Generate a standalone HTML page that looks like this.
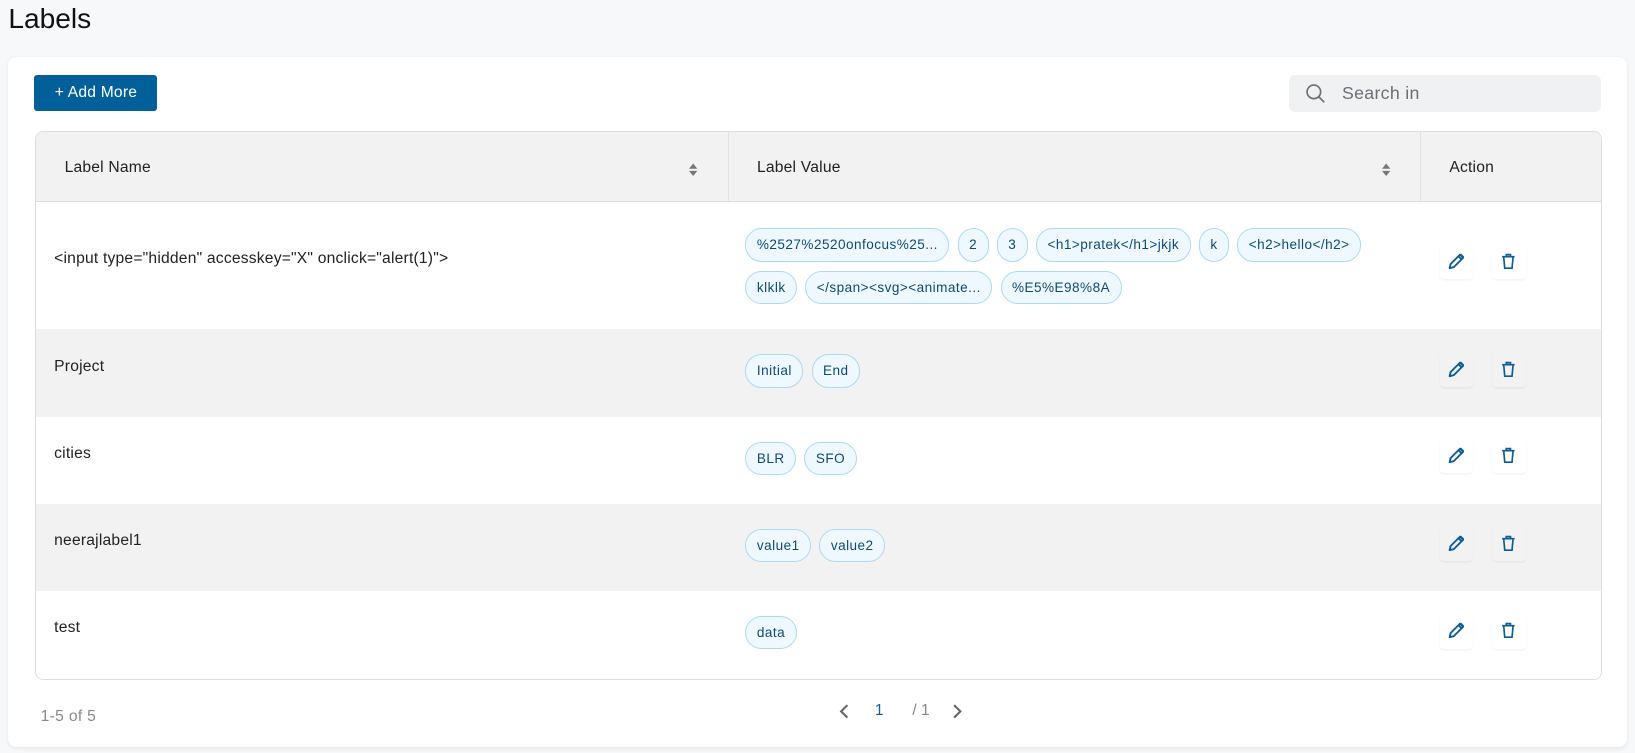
<!DOCTYPE html>
<html><head><meta charset="utf-8"><style>
html{zoom:1.04273}
body{margin:0;background:#f7f8fa;font-family:"Liberation Sans",sans-serif;width:1568px;height:722px;position:relative;overflow:hidden}
.abs{position:absolute}
h1{position:absolute;left:8px;top:3px;margin:0;font-size:27px;font-weight:normal;color:#111}
.card{left:8px;top:55px;width:1552px;height:661px;background:#fff;border-radius:8px;box-shadow:0 1px 4px rgba(0,0,0,.08)}
.btn{left:33px;top:72px;width:118px;height:34px;background:#01609a;border-radius:3px;color:#fff;font-size:15px;line-height:34px;text-align:center;letter-spacing:.2px}
.search{left:1236px;top:72px;width:299px;height:35px;background:#f0f1f3;border-radius:6px}
.search span{position:absolute;left:51px;top:8px;font-size:17px;color:#6b6f76;letter-spacing:.3px}
.table{left:34px;top:126px;width:1500px;height:524px;border:1px solid #ddd;border-radius:8px;overflow:hidden}
.hdr{left:0;top:0;width:1500px;height:66px;background:#f2f2f2;border-bottom:1px solid #ddd}
.hdr .t{position:absolute;top:26px;font-size:15px;color:#222;letter-spacing:.2px}
.div{position:absolute;top:0;width:1px;height:66px;background:#e2e2e2}
.row{position:absolute;left:0;width:1500px}
.name{position:absolute;left:17px;font-size:15px;color:#222;letter-spacing:.2px}
.tags{position:absolute;left:680px;width:640px}
.tag{display:inline-block;height:30px;line-height:30px;padding:0 10px;border:1px solid #a9d9f8;background:#f0f8ff;border-radius:16px;font-size:13px;color:#0c4a76;margin:0 8px 9px 0;vertical-align:top;letter-spacing:.45px}
.act{position:absolute;width:32px;height:32px;border-radius:4px;box-shadow:0 1px 2px rgba(0,0,0,.05)}
.act svg{position:absolute;left:7px;top:6px}
.sort{position:absolute;width:8px}
</style></head><body>
<h1>Labels</h1>
<div class="abs card"></div>
<div class="abs btn">+ Add More</div>
<div class="abs search">
<svg class="abs" style="left:16px;top:8px" width="20" height="20" viewBox="0 0 20 20" fill="none" stroke="#6b6f76" stroke-width="1.6"><circle cx="8.5" cy="8.5" r="6.5"/><path d="M13.3 13.3L18.5 18.5"/></svg>
<span>Search in</span></div>
<div class="abs table">
<div class="abs hdr">
<span class="t" style="left:27px">Label Name</span>
<svg class="sort" style="left:626px;top:29px" width="9" height="13" viewBox="0 0 8 12"><path d="M0 5L4 0L8 5Z M0 7L4 12L8 7Z" fill="#777"/></svg>
<div class="div" style="left:663px"></div>
<span class="t" style="left:691px">Label Value</span>
<svg class="sort" style="left:1290px;top:29px" width="9" height="13" viewBox="0 0 8 12"><path d="M0 5L4 0L8 5Z M0 7L4 12L8 7Z" fill="#777"/></svg>
<div class="div" style="left:1327px"></div>
<span class="t" style="left:1355px">Action</span>
</div>

<div class="row" style="top:67px;height:122px;background:#fff">
<div class="name" style="top:46px">&lt;input type="hidden" accesskey="X" onclick="alert(1)"&gt;</div>
<div class="tags" style="top:25px"><span class="tag">%2527%2520onfocus%25...</span><span class="tag">2</span><span class="tag">3</span><span class="tag">&lt;h1&gt;pratek&lt;/h1&gt;jkjk</span><span class="tag">k</span><span class="tag">&lt;h2&gt;hello&lt;/h2&gt;</span><br><span class="tag">klklk</span><span class="tag">&lt;/span&gt;&lt;svg&gt;&lt;animate...</span><span class="tag">%E5%E98%8A</span></div>
</div>
<div class="row" style="top:189px;height:84px;background:#f2f2f2">
<div class="name" style="top:27px">Project</div>
<div class="tags" style="top:24px"><span class="tag">Initial</span><span class="tag">End</span></div>
</div>
<div class="row" style="top:273px;height:83px;background:#fff">
<div class="name" style="top:27px">cities</div>
<div class="tags" style="top:24px"><span class="tag">BLR</span><span class="tag">SFO</span></div>
</div>
<div class="row" style="top:356px;height:84px;background:#f2f2f2">
<div class="name" style="top:27px">neerajlabel1</div>
<div class="tags" style="top:24px"><span class="tag">value1</span><span class="tag">value2</span></div>
</div>
<div class="row" style="top:440px;height:84px;background:#fff">
<div class="name" style="top:27px">test</div>
<div class="tags" style="top:24px"><span class="tag">data</span></div>
</div>
</div>

<div id="acts"></div>
<script>
var ys=[236,339,422,506,590],h='';
var pen='<svg width="18" height="18" viewBox="0 0 18 18"><path d="M12.5 2.5l3 3-9 9-4 1 1-4z" fill="none" stroke="#0a5d96" stroke-width="1.8" stroke-linejoin="round"/><path d="M11 4l3 3" stroke="#0a5d96" stroke-width="1.8"/><path d="M12.5 2.5l3 3 1-1-3-3z" fill="#0a5d96"/></svg>';
var tr='<svg width="18" height="18" viewBox="0 0 18 18" fill="none" stroke="#0a5d96" stroke-width="1.6"><path d="M3 4.5h12M7 4.5V2.5h4v2M4.5 4.5l1 11h7l1-11"/></svg>';
ys.forEach(function(y){h+='<div class="act" style="left:1381px;top:'+y+'px">'+pen+'</div><div class="act" style="left:1431px;top:'+y+'px">'+tr+'</div>';});
document.getElementById('acts').innerHTML=h;
</script>

<div class="abs" style="left:39px;top:679px;font-size:15px;color:#888;letter-spacing:.3px">1-5 of 5</div>
<svg class="abs" style="left:804px;top:674px" width="12" height="16" viewBox="0 0 12 16"><path d="M9 2L3 8l6 6" fill="none" stroke="#666" stroke-width="2"/></svg>
<div class="abs" style="left:839px;top:673px;font-size:15px;color:#1a5fa0">1</div>
<div class="abs" style="left:875px;top:673px;font-size:15px;color:#888">/ 1</div>
<svg class="abs" style="left:912px;top:674px" width="12" height="16" viewBox="0 0 12 16"><path d="M3 2l6 6-6 6" fill="none" stroke="#666" stroke-width="2"/></svg>
</body></html>
